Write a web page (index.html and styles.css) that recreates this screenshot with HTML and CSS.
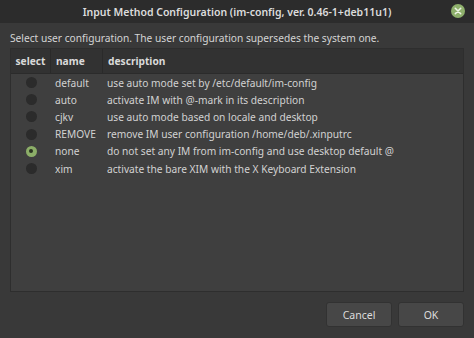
FILE: index.html
```html
<!DOCTYPE html>
<html>
<head>
<meta charset="utf-8">
<link rel="stylesheet" href="styles.css">
</head>
<body>
<div class="window">
  <div class="titlebar">
    <span class="title">Input Method Configuration (im-config, ver. 0.46-1+deb11u1)</span>
    <span class="close"><svg width="14" height="14" viewBox="0 0 14 14"><circle cx="7" cy="7" r="7" fill="#8eb06c"/><path d="M4.3 4.3L9.7 9.7M9.7 4.3L4.3 9.7" stroke="#eef5e6" stroke-width="1.6" stroke-linecap="round"/></svg></span>
  </div>
  <div class="content">
    <p class="intro">Select user configuration. The user configuration supersedes the system one.</p>
    <div class="table">
      <div class="head">
        <div class="c1">select</div><div class="c2">name</div><div class="c3">description</div>
      </div>
      <div class="rows">
        <div class="row"><div class="c1"><span class="radio"></span></div><div class="c2">default</div><div class="c3">use auto mode set by /etc/default/im-config</div></div>
        <div class="row"><div class="c1"><span class="radio"></span></div><div class="c2">auto</div><div class="c3">activate IM with @-mark in its description</div></div>
        <div class="row"><div class="c1"><span class="radio"></span></div><div class="c2">cjkv</div><div class="c3">use auto mode based on locale and desktop</div></div>
        <div class="row"><div class="c1"><span class="radio"></span></div><div class="c2">REMOVE</div><div class="c3">remove IM user configuration /home/deb/.xinputrc</div></div>
        <div class="row"><div class="c1"><span class="radio on"></span></div><div class="c2">none</div><div class="c3">do not set any IM from im-config and use desktop default @</div></div>
        <div class="row"><div class="c1"><span class="radio"></span></div><div class="c2">xim</div><div class="c3">activate the bare XIM with the X Keyboard Extension</div></div>
      </div>
    </div>
    <div class="buttons">
      <button class="btn">Cancel</button>
      <button class="btn">OK</button>
    </div>
  </div>
</div>
</body>
</html>
```
FILE: styles.css
```css
* { box-sizing: border-box; }
html, body { margin: 0; padding: 0; }
body {
  width: 474px; height: 338px; overflow: hidden;
  background: #393939;
  font-family: "Noto Sans", "Open Sans", sans-serif;
  font-size: 10.2px;
  color: #d6d6d6;
}
.window { display: flex; flex-direction: column; height: 338px; }
.titlebar {
  height: 23px; flex: none;
  background: #2c2c2c;
  display: flex; align-items: center; justify-content: center;
  position: relative;
  color: #dcdcdc; font-weight: 600; font-size: 10.5px;
}
.close { position: absolute; right: 9px; top: 4px; width: 14px; height: 14px; display: block; }
.close svg { display: block; }
.content {
  flex: 1; display: flex; flex-direction: column;
  padding: 7px 10px 12px 10px;
}
.intro { margin: 0 0 1px 0; height: 17px; line-height: 17px; color: #d4d4d4; }
.table {
  height: 244px;
  border: 1px solid #2e2e2e;
  background: #3f3f3f;
  display: flex; flex-direction: column;
}
.head {
  height: 25px; flex: none;
  background: #323232;
  border-bottom: 1px solid #2b2b2b;
  display: flex; align-items: center;
  font-weight: 700; color: #dadada;
}
.head > div { height: 100%; display: flex; align-items: center; }
.head .c1 { border-right: 1px solid #2a2a2a; justify-content: center; }
.head .c2 { border-right: 1px solid #2a2a2a; padding-left: 5px; }
.head .c3 { padding-left: 5px; }
.c1 { width: 40px; flex: none; }
.c2 { width: 52px; flex: none; }
.c3 { flex: 1; }
.row { height: 17.2px; display: flex; align-items: center; color: #d2d2d2; }
.row .c1 { display: flex; justify-content: center; }
.row .c2 { padding-left: 4px; }
.row .c3 { padding-left: 4px; }
.radio {
  width: 11px; height: 11px; border-radius: 50%;
  background: #2b2b2b; display: block;
}
.radio.on {
  background: #8cae68;
  position: relative;
}
.radio.on::after {
  content: ""; position: absolute; left: 3.5px; top: 3.5px;
  width: 4px; height: 4px; border-radius: 50%; background: #2a3320;
}
.buttons {
  display: flex; justify-content: flex-end; gap: 6px;
  margin-top: 10px;
}
.btn {
  width: 66px; height: 25px;
  background: #474747; border: 1px solid #323232; border-radius: 3px;
  color: #dcdcdc; font-family: inherit; font-size: 10.5px;
  padding: 0;
}
```
